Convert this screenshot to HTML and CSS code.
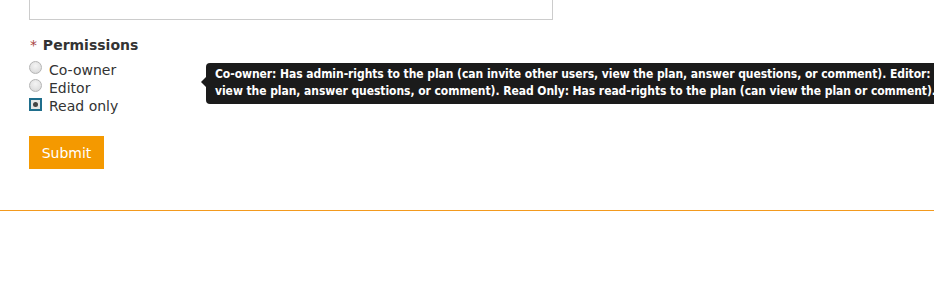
FILE: index.html
```html
<!DOCTYPE html>
<html>
<head>
<meta charset="utf-8">
<link rel="stylesheet" href="styles.css">
</head>
<body>
<div class="page">
  <form class="form">
    <div class="textbox"></div>
    <div class="field">
      <div class="label"><span class="req">*</span> Permissions</div>
      <div class="options">
        <label class="opt"><span class="radio"></span>Co-owner</label>
        <label class="opt"><span class="radio"></span>Editor</label>
        <label class="opt"><span class="radio checked"></span>Read only</label>
      </div>
      <div class="tooltip">
        <span class="tip-line">Co-owner: Has admin-rights to the plan (can invite other users, view the plan, answer questions, or comment). Editor: Has edit-rights to the plan (can</span>
        <span class="tip-line">view the plan, answer questions, or comment). Read Only: Has read-rights to the plan (can view the plan or comment).</span>
      </div>
    </div>
    <button type="button" class="submit">Submit</button>
  </form>
  <div class="footer-line"></div>
</div>
</body>
</html>
```
FILE: styles.css
```css
html, body {
  margin: 0;
  padding: 0;
  background: #fff;
  overflow: hidden;
}
.page {
  font-family: "DejaVu Sans", Verdana, sans-serif;
  color: #333;
  font-size: 14px;
}
.form {
  padding: 0 0 41px 29px;
}
.textbox {
  width: 522px;
  height: 19px;
  border: 1px solid #ccc;
  border-top: none;
}
.field {
  position: relative;
  margin-top: 16px;
}
.label {
  font-weight: bold;
  font-size: 14px;
  line-height: 18px;
  color: #333;
}
.req {
  color: #a94442;
  font-weight: normal;
  margin-left: 1px;
  margin-right: 1px;
}
.options {
  display: flex;
  flex-direction: column;
  margin-top: 7px;
}
.opt {
  display: flex;
  align-items: center;
  height: 18px;
  line-height: 18px;
  color: #333;
}
.radio {
  width: 11px;
  height: 11px;
  border-radius: 50%;
  border: 1px solid #b5b5b5;
  background: radial-gradient(circle at 50% 35%, #f4f4f4 0%, #e2e2e2 60%, #d0d0d0 100%);
  margin: 0 7px 0 0;
  flex: none;
  position: relative;
  top: -3px;
}
.radio.checked {
  border-radius: 0;
  width: 9px;
  height: 9px;
  border: 2px solid #1f6e8c;
  background: #e6e6e6;
  top: -2px;
}
.radio.checked::after {
  content: "";
  position: absolute;
  left: 2px;
  top: 2px;
  width: 5px;
  height: 5px;
  border-radius: 50%;
  background: #444;
}
.tooltip {
  position: absolute;
  left: 177px;
  top: 27px;
  background: #1b1b1b;
  color: #fff;
  border-radius: 4px;
  padding: 3px 9px 4px 9px;
  font-family: "DejaVu Sans Condensed", "DejaVu Sans", sans-serif;
  font-weight: bold;
  font-size: 12px;
  line-height: 17px;
  letter-spacing: -0.06px;
  white-space: nowrap;
}
.tooltip::before {
  content: "";
  position: absolute;
  left: -5px;
  top: 14px;
  border-style: solid;
  border-width: 5px 5px 5px 0;
  border-color: transparent #1b1b1b transparent transparent;
}
.tip-line {
  display: block;
}
.submit {
  display: block;
  margin-top: 21px;
  width: 75px;
  height: 33px;
  background: #f49900;
  color: #fff;
  border: none;
  border-radius: 0;
  font-family: "DejaVu Sans", Verdana, sans-serif;
  font-size: 14px;
  padding: 0;
}
.footer-line {
  height: 1px;
  background: #f39a1e;
}
```
